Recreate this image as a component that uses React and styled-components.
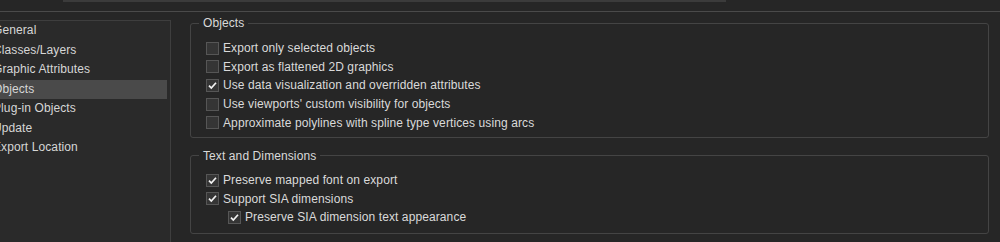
import React from 'react'
import styled, { createGlobalStyle } from 'styled-components'

const Global = createGlobalStyle`
  html, body { margin: 0; padding: 0; background: #262626; }
  body { font-family: "Liberation Sans", Arial, sans-serif; font-size: 12px; letter-spacing: 0.1px; color: #d9d9d9; }
`

const Window = styled.div`
  width: 1000px;
  height: 242px;
  background: #262626;
  overflow: hidden;
  display: flex;
  flex-direction: column;
`

const TopBox = styled.div`
  height: 11px;
  width: 1000px;
  margin-left: -12px;
  border-right: 1px solid #4a4a4a;
  border-bottom: 1px solid #4a4a4a;
  border-bottom-right-radius: 3px;
  display: flex;
  padding-left: 75px;
  flex-shrink: 0;
`

const FieldEdge = styled.div`
  width: 663px;
  height: 2px;
  background: #3b3b3b;
`

const Main = styled.div`
  display: flex;
  margin-top: 4px;
  flex: 1;
  min-height: 0;
`

const Sidebar = styled.ul`
  list-style: none;
  margin: 4px 0 0 -12px;
  padding: 0 3px 0 0;
  width: 178px;
  height: 260px;
  flex-shrink: 0;
  background: #2a2a2a;
  border: 1px solid #3e3e3e;
`

const NavItem = styled.li`
  height: 19.5px;
  line-height: 19.5px;
  padding-left: 4px;
  white-space: nowrap;
  color: #d6d6d6;
  background: ${p => (p.$active ? '#4a4a4a' : 'transparent')};
`

const Content = styled.div`
  margin-left: 19px;
  width: 799px;
  display: flex;
  flex-direction: column;
  gap: 11px;
`

const Group = styled.fieldset`
  margin: 0;
  padding: ${p => (p.$top ? '9px 0 5px 15px' : '8px 0 6px 15px')};
  border: 1px solid #444;
  border-radius: 3px;
  min-width: 0;
`

const Legend = styled.legend`
  margin-left: -7px;
  padding: 0 4px;
  line-height: 14px;
  color: #d9d9d9;
`

const Row = styled.label`
  display: flex;
  align-items: center;
  height: 18.6px;
  gap: 4px;
  padding-left: ${p => (p.$indent ? '22px' : '0')};
  color: #dadada;
  white-space: nowrap;
`

const Box = styled.span`
  width: 13px;
  height: 13px;
  box-sizing: border-box;
  border: 1px solid #565656;
  background: #353535;
  display: flex;
  align-items: center;
  justify-content: center;
  flex-shrink: 0;
`

const Check = ({ on }) => (
  <Box>
    {on && (
      <svg width="11" height="11" viewBox="0 0 11 11">
        <path d="M2 5.6 L4.3 8 L9 2.8" fill="none" stroke="#f2f2f2" strokeWidth="1.7" />
      </svg>
    )}
  </Box>
)

const nav = ['General', 'Classes/Layers', 'Graphic Attributes', 'Objects', 'Plug-in Objects', 'Update', 'Export Location']

const objects = [
  ['Export only selected objects', false],
  ['Export as flattened 2D graphics', false],
  ['Use data visualization and overridden attributes', true],
  ["Use viewports' custom visibility for objects", false],
  ['Approximate polylines with spline type vertices using arcs', false],
]

const text = [
  ['Preserve mapped font on export', true, false],
  ['Support SIA dimensions', true, false],
  ['Preserve SIA dimension text appearance', true, true],
]

export default function App() {
  return (
    <Window>
      <Global />
      <TopBox>
        <FieldEdge />
      </TopBox>
      <Main>
        <Sidebar>
          {nav.map(n => (
            <NavItem key={n} $active={n === 'Objects'}>{n}</NavItem>
          ))}
        </Sidebar>
        <Content>
          <Group $top>
            <Legend>Objects</Legend>
            {objects.map(([label, on]) => (
              <Row key={label}>
                <Check on={on} />
                {label}
              </Row>
            ))}
          </Group>
          <Group>
            <Legend>Text and Dimensions</Legend>
            {text.map(([label, on, indent]) => (
              <Row key={label} $indent={indent}>
                <Check on={on} />
                {label}
              </Row>
            ))}
          </Group>
        </Content>
      </Main>
    </Window>
  )
}
